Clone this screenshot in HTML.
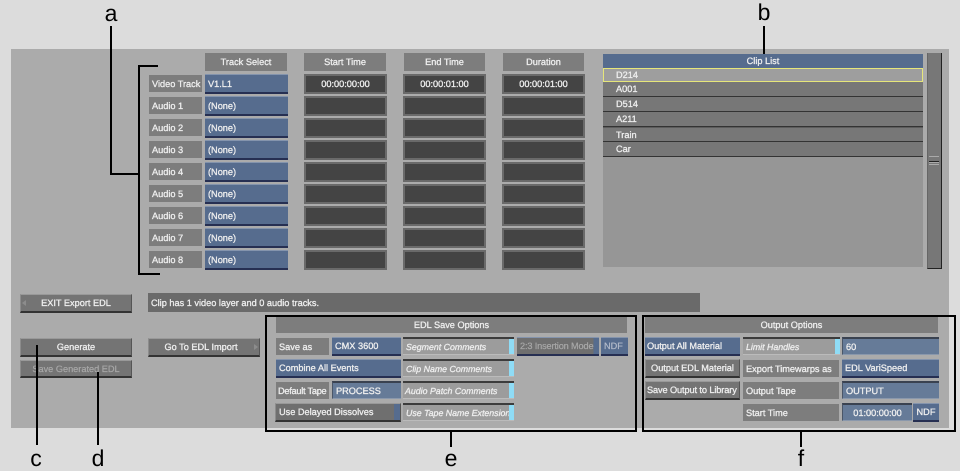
<!DOCTYPE html>
<html><head><meta charset="utf-8">
<style>
html,body{margin:0;padding:0;background:#dcdcdc}
#p{position:relative;width:960px;height:471px;overflow:hidden;background:#dcdcdc;font-family:"Liberation Sans",sans-serif;text-rendering:geometricPrecision}
#p div{position:absolute;box-sizing:border-box;white-space:nowrap}
.t{font-size:9.2px;font-weight:normal;color:#eee;display:flex;align-items:center;overflow:hidden;-webkit-text-stroke:.3px #eee}
.c{justify-content:center}
.pl{padding-left:3px}
.l{background:#7d7d7d}
.b{background:#566c8e;border-top:1px solid #8494ad;border-bottom:2px solid #262f52;padding-left:3px}
.v{background:#667b98;border-top:2px solid #3a4250;border-left:1px solid #4a5668;border-bottom:1px solid #8a98ac;padding-left:3px}
.g{background:#747474;border-top:1px solid #999;border-left:1px solid #8c8c8c;border-bottom:2px solid #333;border-right:1px solid #555}
.h{background:#7d7d7d}
.f{background:#444;border:2px solid #6a6a6a}
.i{background:#9c9c9c;border-top:2px solid #3c3c3c;border-bottom:1px solid #bbb;font-style:italic;padding-left:3px;font-size:8.8px}
.i:after{content:"";position:absolute;right:0;top:0;bottom:0;width:5px;background:#8fdcf6}
.k{background:#000}
.r{background:#777;border-bottom:1px solid #333;padding-left:13px;left:603px;width:320px;height:15px}
.x{font-size:23px;color:#000;line-height:24px;transform:translateX(-50%)}
</style></head><body><div id="p">
<div style="left:11px;top:49px;width:938px;height:379px;background:#ababab"></div>

<!-- headers -->
<div class="t c h" style="left:205px;top:53px;width:82px;height:18px">Track Select</div>
<div class="t c h" style="left:304px;top:53px;width:82px;height:18px">Start Time</div>
<div class="t c h" style="left:404px;top:53px;width:81px;height:18px">End Time</div>
<div class="t c h" style="left:503px;top:53px;width:81px;height:18px">Duration</div>

<!-- labels -->
<div class="t l pl" style="left:149px;top:75px;width:53px;height:17px">Video Track</div>
<div class="t l pl" style="left:149px;top:97px;width:53px;height:17px">Audio 1</div>
<div class="t l pl" style="left:149px;top:119px;width:53px;height:17px">Audio 2</div>
<div class="t l pl" style="left:149px;top:141px;width:53px;height:17px">Audio 3</div>
<div class="t l pl" style="left:149px;top:163px;width:53px;height:17px">Audio 4</div>
<div class="t l pl" style="left:149px;top:185px;width:53px;height:17px">Audio 5</div>
<div class="t l pl" style="left:149px;top:207px;width:53px;height:17px">Audio 6</div>
<div class="t l pl" style="left:149px;top:229px;width:53px;height:17px">Audio 7</div>
<div class="t l pl" style="left:149px;top:251px;width:53px;height:17px">Audio 8</div>

<!-- track select -->
<div class="t b" style="left:205px;top:74px;width:83px;height:20px">V1.L1</div>
<div class="t b" style="left:205px;top:96px;width:83px;height:20px">(None)</div>
<div class="t b" style="left:205px;top:118px;width:83px;height:20px">(None)</div>
<div class="t b" style="left:205px;top:140px;width:83px;height:20px">(None)</div>
<div class="t b" style="left:205px;top:162px;width:83px;height:20px">(None)</div>
<div class="t b" style="left:205px;top:184px;width:83px;height:20px">(None)</div>
<div class="t b" style="left:205px;top:206px;width:83px;height:20px">(None)</div>
<div class="t b" style="left:205px;top:228px;width:83px;height:20px">(None)</div>
<div class="t b" style="left:205px;top:250px;width:83px;height:20px">(None)</div>

<!-- time fields -->
<div class="t c f" style="left:304px;top:74px;width:83px;height:20px">00:00:00:00</div>
<div class="t c f" style="left:403px;top:74px;width:83px;height:20px">00:00:01:00</div>
<div class="t c f" style="left:502px;top:74px;width:83px;height:20px">00:00:01:00</div>

<div class="f" style="left:304px;top:96px;width:83px;height:20px"></div><div class="f" style="left:403px;top:96px;width:83px;height:20px"></div><div class="f" style="left:502px;top:96px;width:83px;height:20px"></div>
<div class="f" style="left:304px;top:118px;width:83px;height:20px"></div><div class="f" style="left:403px;top:118px;width:83px;height:20px"></div><div class="f" style="left:502px;top:118px;width:83px;height:20px"></div>
<div class="f" style="left:304px;top:140px;width:83px;height:20px"></div><div class="f" style="left:403px;top:140px;width:83px;height:20px"></div><div class="f" style="left:502px;top:140px;width:83px;height:20px"></div>
<div class="f" style="left:304px;top:162px;width:83px;height:20px"></div><div class="f" style="left:403px;top:162px;width:83px;height:20px"></div><div class="f" style="left:502px;top:162px;width:83px;height:20px"></div>
<div class="f" style="left:304px;top:184px;width:83px;height:20px"></div><div class="f" style="left:403px;top:184px;width:83px;height:20px"></div><div class="f" style="left:502px;top:184px;width:83px;height:20px"></div>
<div class="f" style="left:304px;top:206px;width:83px;height:20px"></div><div class="f" style="left:403px;top:206px;width:83px;height:20px"></div><div class="f" style="left:502px;top:206px;width:83px;height:20px"></div>
<div class="f" style="left:304px;top:228px;width:83px;height:20px"></div><div class="f" style="left:403px;top:228px;width:83px;height:20px"></div><div class="f" style="left:502px;top:228px;width:83px;height:20px"></div>
<div class="f" style="left:304px;top:250px;width:83px;height:20px"></div><div class="f" style="left:403px;top:250px;width:83px;height:20px"></div><div class="f" style="left:502px;top:250px;width:83px;height:20px"></div>

<!-- clip list -->
<div style="left:603px;top:54px;width:320px;height:213px;background:#969696"></div>
<div class="t c" style="left:603px;top:54px;width:320px;height:14px;background:#566c8e">Clip List</div>
<div class="t" style="left:603px;top:68px;width:320px;height:14px;background:#9e9e9e;border:1px solid #e6e67a;padding-left:12px">D214</div>
<div class="t r" style="top:82px">A001</div>
<div class="t r" style="top:97px">D514</div>
<div class="t r" style="top:112px">A211</div>
<div class="t r" style="top:127px;border-top:1px solid #5c5c5c;height:15px">Train</div>
<div class="t r" style="top:142px;height:15px">Car</div>

<!-- scrollbar -->
<div style="left:927px;top:53px;width:15px;height:216px;background:#777;border-left:1px solid #666;border-right:1px solid #222;border-bottom:1px solid #222"></div>
<div style="left:929px;top:156px;width:10px;height:1px;background:#aaa"></div>
<div style="left:929px;top:161px;width:10px;height:1px;background:#222"></div>
<div style="left:929px;top:162px;width:10px;height:1px;background:#aaa"></div>
<div style="left:929px;top:164px;width:10px;height:1px;background:#aaa"></div>

<!-- bottom left -->
<div class="t c g" style="left:20px;top:294px;width:112px;height:19px">EXIT Export EDL</div>
<div style="left:22px;top:300px;width:0;height:0;border:3.5px solid transparent;border-right:4px solid #8c8c8c;border-left:0"></div>
<div class="t pl h" style="left:148px;top:293px;width:552px;height:19px;background:#6a6a6a">Clip has 1 video layer and 0 audio tracks.</div>
<div class="t c g" style="left:20px;top:338px;width:112px;height:19px">Generate</div>
<div class="t c g" style="left:20px;top:360px;width:112px;height:18px;color:#a8a8a8;-webkit-text-stroke:.2px #a8a8a8">Save Generated EDL</div>
<div class="t c g" style="left:148px;top:338px;width:112px;height:19px;padding-right:6px">Go To EDL Import</div>
<div style="left:254px;top:344px;width:0;height:0;border:3.5px solid transparent;border-left:4px solid #8c8c8c;border-right:0"></div>

<!-- EDL save options -->
<div class="t c h" style="left:276px;top:317px;width:351px;height:16px">EDL Save Options</div>
<div class="t l pl" style="left:276px;top:338px;width:53px;height:17px">Save as</div>
<div class="t b" style="left:332px;top:337px;width:69px;height:19px">CMX 3600</div>
<div class="t i" style="left:403px;top:337px;width:111px;height:18px">Segment Comments</div>
<div class="t b" style="left:517px;top:337px;width:82px;height:19px;color:#a8a8a8;-webkit-text-stroke:.2px #a8a8a8;letter-spacing:-.15px;background:linear-gradient(90deg,#6f6f6f 93%,#566c8e 93%)">2:3 Insertion Mode</div>
<div class="t b" style="left:601px;top:337px;width:27px;height:19px;color:#b4bccb;-webkit-text-stroke:.2px #b4bccb">NDF</div>
<div class="t b" style="left:276px;top:359px;width:125px;height:19px">Combine All Events</div>
<div class="t i" style="left:403px;top:359px;width:111px;height:18px">Clip Name Comments</div>
<div class="t l" style="left:276px;top:382px;width:53px;height:17px;padding-left:2px;letter-spacing:-.25px">Default Tape</div>
<div class="t v" style="left:332px;top:381px;width:69px;height:18px">PROCESS</div>
<div class="t i" style="left:403px;top:381px;width:111px;height:18px;padding-left:2px">Audio Patch Comments</div>
<div class="t g" style="left:275px;top:403px;width:126px;height:19px;padding-left:3px;background:linear-gradient(90deg,#6f6f6f 95%,#566c8e 95%)">Use Delayed Dissolves</div>
<div class="t i" style="left:403px;top:403px;width:111px;height:18px">Use Tape Name Extension</div>

<!-- Output options -->
<div class="t c h" style="left:645px;top:317px;width:293px;height:16px">Output Options</div>
<div class="t b" style="left:645px;top:337px;width:95px;height:19px;padding-left:2px">Output All Material</div>
<div class="t c g" style="left:645px;top:359px;width:95px;height:19px">Output EDL Material</div>
<div class="t g" style="left:645px;top:381px;width:95px;height:19px;padding-left:1px;letter-spacing:-.1px">Save Output to Library</div>
<div class="t i" style="left:743px;top:337px;width:97px;height:18px">Limit Handles</div>
<div class="t v" style="left:842px;top:337px;width:97px;height:18px">60</div>
<div class="t l pl" style="left:743px;top:360px;width:96px;height:17px">Export Timewarps as</div>
<div class="t b" style="left:842px;top:359px;width:97px;height:19px">EDL VariSpeed</div>
<div class="t l pl" style="left:743px;top:382px;width:96px;height:17px">Output Tape</div>
<div class="t v" style="left:842px;top:381px;width:97px;height:18px">OUTPUT</div>
<div class="t l pl" style="left:743px;top:404px;width:96px;height:17px">Start Time</div>
<div class="t c v" style="left:842px;top:403px;width:70px;height:18px;padding-left:0">01:00:00:00</div>
<div class="t c b" style="left:913px;top:403px;width:26px;height:19px;padding-left:0">NDF</div>

<!-- callouts -->
<div class="k" style="left:110px;top:26px;width:2px;height:149px"></div>
<div class="k" style="left:110px;top:173px;width:29px;height:2px"></div>
<div class="k" style="left:138px;top:65px;width:2px;height:210px"></div>
<div class="k" style="left:138px;top:65px;width:20px;height:2px"></div>
<div class="k" style="left:138px;top:273px;width:22px;height:2px"></div>
<div class="k" style="left:763px;top:26px;width:2px;height:28px"></div>
<div class="k" style="left:36px;top:345px;width:2px;height:100px"></div>
<div class="k" style="left:97px;top:372px;width:2px;height:73px"></div>
<div style="left:265px;top:315px;width:372px;height:117px;border:2px solid #000"></div>
<div style="left:642px;top:315px;width:314px;height:117px;border:2px solid #000"></div>
<div class="k" style="left:450px;top:432px;width:2px;height:15px"></div>
<div class="k" style="left:800px;top:432px;width:2px;height:15px"></div>
<div class="x" style="left:111px;top:1px">a</div>
<div class="x" style="left:764px;top:0">b</div>
<div class="x" style="left:36px;top:446px">c</div>
<div class="x" style="left:98px;top:446px">d</div>
<div class="x" style="left:451px;top:446px">e</div>
<div class="x" style="left:801px;top:446px">f</div>
</div></body></html>
